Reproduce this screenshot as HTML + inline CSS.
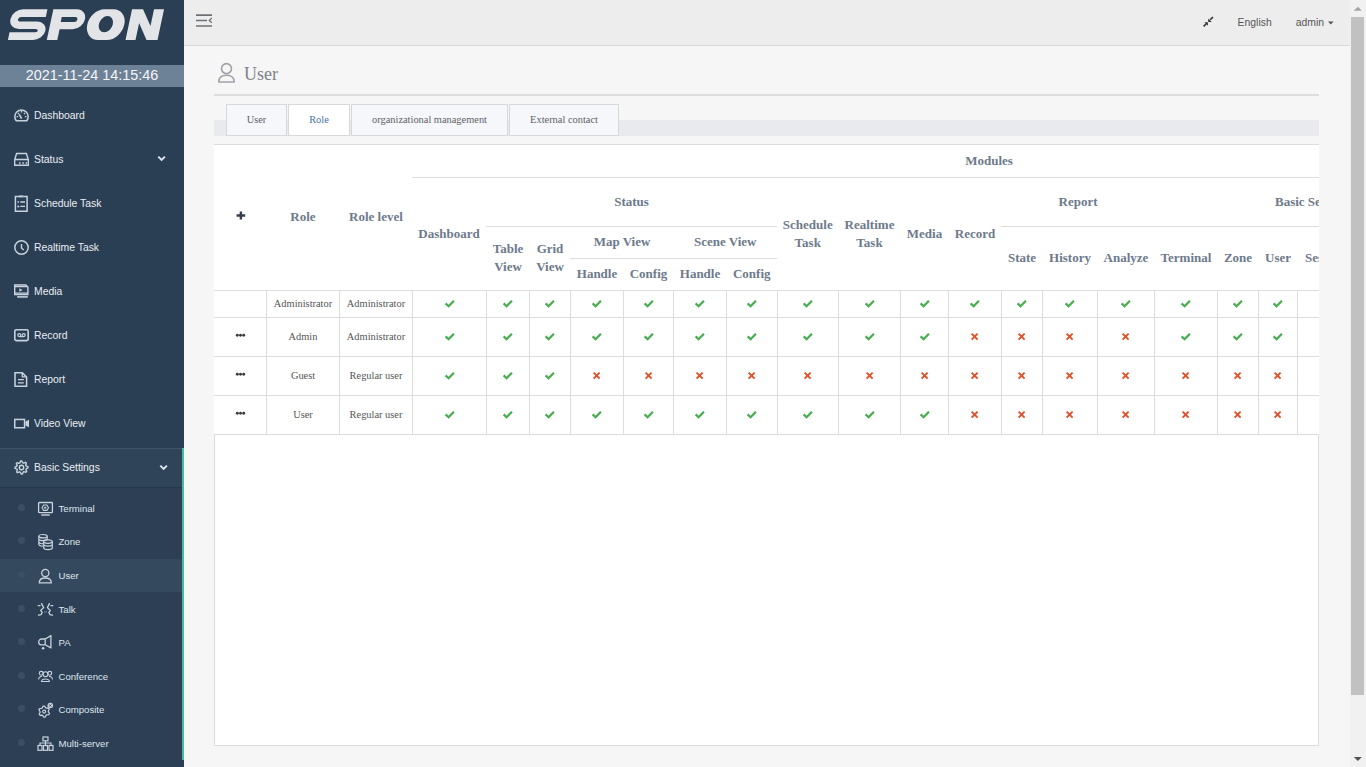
<!DOCTYPE html>
<html><head><meta charset="utf-8"><title>User</title>
<style>
html,body{margin:0;padding:0;width:1366px;height:767px;overflow:hidden;background:#f6f6f6;}
*{box-sizing:border-box;}
.abs{position:absolute;}
</style></head><body>
<div class="abs" style="left:0;top:0;width:184px;height:767px;background:#2b3f54;"></div>
<div class="abs" style="left:0;top:448px;width:182px;height:312px;background:#2c3f54;"></div>
<div class="abs" style="left:0;top:448px;width:182px;height:40px;background:#2f4459;border-top:1px solid #3f536a;border-bottom:1px solid #26384b;"></div>
<div class="abs" style="left:0;top:559px;width:182px;height:33px;background:#35495e;"></div>
<div class="abs" style="left:182px;top:448px;width:2.3px;height:312px;background:#48bca2;"></div>
<svg class="abs" style="left:0;top:0" width="184" height="60" viewBox="0 0 184 60">
<g transform="matrix(1 0 -0.2126 1 8.504 0)" fill="#e2e4e7">
<path d="M40.9 13.1 H16.6 A6.8 6.1 0 0 0 16.6 25.3 H33 A6.6 5.4 0 0 1 33 36.1 H7.9" fill="none" stroke="#e2e4e7" stroke-width="7.6"/>
<path fill-rule="evenodd" d="M46.8 9.2 H70.5 A10.05 10.05 0 0 1 70.5 29.3 H57.3 V40 H46.8 Z M56.9 17.1 H70.5 A2.5 2.5 0 0 1 70.5 22.1 H56.9 Z"/>
<path fill-rule="evenodd" d="M98 9.2 H107 A14 15.4 0 0 1 121 24.6 A14 15.4 0 0 1 107 40 H98 A14 15.4 0 0 1 84 24.6 A14 15.4 0 0 1 98 9.2 Z M102.5 16.1 A7 8.1 0 1 0 102.5 32.3 A7 8.1 0 1 0 102.5 16.1 Z"/>
<path d="M125.5 40 V9.2 H136.5 L147.5 26 V9.2 H157.5 V40 H146.5 L135.5 23 V40 Z"/>
</g></svg>
<div class="abs" style="left:0;top:65px;width:184px;height:22px;background:#6d8197;"></div>
<div style="position:absolute;left:0.00px;top:68px;width:184px;text-align:center;font:normal 14.4px/14.4px 'Liberation Sans', sans-serif;color:#f4f6f8;white-space:nowrap;">2021-11-24 14:15:46</div>
<div style="position:absolute;left:34.00px;top:111px;font:normal 10.4px/10.4px 'Liberation Sans', sans-serif;color:#e9eef3;white-space:nowrap;">Dashboard</div>
<div style="position:absolute;left:34.00px;top:155px;font:normal 10.4px/10.4px 'Liberation Sans', sans-serif;color:#e9eef3;white-space:nowrap;">Status</div>
<div style="position:absolute;left:34.00px;top:199px;font:normal 10.4px/10.4px 'Liberation Sans', sans-serif;color:#e9eef3;white-space:nowrap;">Schedule Task</div>
<div style="position:absolute;left:34.00px;top:243px;font:normal 10.4px/10.4px 'Liberation Sans', sans-serif;color:#e9eef3;white-space:nowrap;">Realtime Task</div>
<div style="position:absolute;left:34.00px;top:287px;font:normal 10.4px/10.4px 'Liberation Sans', sans-serif;color:#e9eef3;white-space:nowrap;">Media</div>
<div style="position:absolute;left:34.00px;top:331px;font:normal 10.4px/10.4px 'Liberation Sans', sans-serif;color:#e9eef3;white-space:nowrap;">Record</div>
<div style="position:absolute;left:34.00px;top:375px;font:normal 10.4px/10.4px 'Liberation Sans', sans-serif;color:#e9eef3;white-space:nowrap;">Report</div>
<div style="position:absolute;left:34.00px;top:419px;font:normal 10.4px/10.4px 'Liberation Sans', sans-serif;color:#e9eef3;white-space:nowrap;">Video View</div>
<div style="position:absolute;left:34.00px;top:463px;font:normal 10.4px/10.4px 'Liberation Sans', sans-serif;color:#e9eef3;white-space:nowrap;">Basic Settings</div>
<svg class="abs" style="left:13px;top:108px" width="18" height="16" viewBox="0 0 18 16" fill="none" stroke="#c9d3de" stroke-width="1.4"><path d="M3.2 12.8 A6.7 6.7 0 1 1 13.8 12.8 Z" stroke-width="1.5"/><path d="M8.5 3 V4.6 M3.6 8.6 H5.1 M11.9 8.6 H13.4 M5 5 L6 6 M12 5 L11 6"/><path d="M8.6 10.6 L6.2 6.3" stroke-width="1.7"/></svg>
<svg class="abs" style="left:14px;top:152px" width="16" height="15" viewBox="0 0 16 15" fill="none" stroke="#c9d3de" stroke-width="1.4"><path d="M2.6 1.5 H12.4 L14.3 7.5 V13.3 H0.7 V7.5 Z M0.7 7.5 H14.3" stroke-width="1.4"/><path d="M5 11 H6.6 M8.3 11 H9.9 M11.5 11 H13" stroke-width="1.5"/></svg>
<svg class="abs" style="left:14px;top:195px" width="15" height="18" viewBox="0 0 15 18" fill="none" stroke="#c9d3de" stroke-width="1.4"><path d="M5 1.6 H1.4 V16.2 H13.1 V1.6 H9.6" stroke-width="1.5"/><path d="M5 1.4 H9.6" stroke-width="2"/><path d="M3.5 7 H5 M6.3 7 H11 M6.3 11.3 H11" stroke-width="1.3"/><circle cx="4.3" cy="11.5" r="1" fill="#c9d3de" stroke="none"/></svg>
<svg class="abs" style="left:13px;top:239px" width="17" height="17" viewBox="0 0 17 17" fill="none" stroke="#c9d3de" stroke-width="1.4"><circle cx="8.5" cy="8.5" r="6.7" stroke-width="1.5"/><path d="M8.5 5 V9 L10.7 11"/></svg>
<svg class="abs" style="left:13px;top:283px" width="18" height="17" viewBox="0 0 18 17" fill="none" stroke="#c9d3de" stroke-width="1.4"><path d="M1.7 2 H12.8 L14.9 4 V11.6 H1.7 Z" stroke-width="1.4"/><path d="M1.7 3.6 H14.9 M1.7 10.1 H14.9" stroke-width="1.1"/><path d="M4.2 13.9 H14.8" stroke-width="1.6"/><path d="M6.4 5.2 L6.4 8.8 L9.6 7 Z" fill="#c9d3de" stroke="none"/></svg>
<svg class="abs" style="left:13px;top:328px" width="17" height="15" viewBox="0 0 17 15" fill="none" stroke="#c9d3de" stroke-width="1.4"><rect x="1.8" y="1.8" width="13.4" height="10.8" rx="1.5" stroke-width="1.6"/><circle cx="6.3" cy="7.1" r="1.5" stroke-width="1.2"/><circle cx="10.7" cy="7.1" r="1.5" stroke-width="1.2"/><path d="M6.3 8.6 H10.7" stroke-width="1.2"/></svg>
<svg class="abs" style="left:13px;top:371px" width="16" height="17" viewBox="0 0 16 17" fill="none" stroke="#c9d3de" stroke-width="1.4"><path d="M2 1.7 H9.3 L13.6 6 V15.2 H2 Z" stroke-width="1.5"/><path d="M9.3 1.7 V5.8 H13.6" stroke-width="1.3"/><path d="M5 8.7 H10.8 M5 11.8 H10.8" stroke-width="1.3"/></svg>
<svg class="abs" style="left:13px;top:417px" width="17" height="13" viewBox="0 0 17 13" fill="none" stroke="#c9d3de" stroke-width="1.4"><rect x="1.75" y="2.45" width="9.8" height="8.3" stroke-width="1.5"/><path d="M12.5 4.6 L16 2.8 V10.2 L12.5 8.5 Z" fill="#c9d3de" stroke="none"/></svg>
<svg class="abs" style="left:13px;top:459px" width="17" height="17" viewBox="0 0 17 17" fill="none" stroke="#c9d3de" stroke-width="1.4"><path d="M7.55 2.07 L8.82 2.01 L9.69 3.75 L10.60 4.07 L12.37 3.28 L13.32 4.13 L12.70 5.98 L13.11 6.85 L14.93 7.55 L14.99 8.82 L13.25 9.69 L12.93 10.60 L13.72 12.37 L12.87 13.32 L11.02 12.70 L10.15 13.11 L9.45 14.93 L8.18 14.99 L7.31 13.25 L6.40 12.93 L4.63 13.72 L3.68 12.87 L4.30 11.02 L3.89 10.15 L2.07 9.45 L2.01 8.18 L3.75 7.31 L4.07 6.40 L3.28 4.63 L4.13 3.68 L5.98 4.30 L6.85 3.89 Z" stroke-width="1.4" stroke-linejoin="round"/><circle cx="8.5" cy="8.5" r="2.2" stroke-width="1.4"/></svg>
<svg class="abs" style="left:157px;top:155px" width="10" height="8" viewBox="0 0 10 8"><path d="M1.3 1.6 L4.6 4.9 L7.9 1.6" fill="none" stroke="#dbe4ee" stroke-width="2"/></svg>
<svg class="abs" style="left:158.5px;top:463.5px" width="10" height="8" viewBox="0 0 10 8"><path d="M1.3 1.6 L4.6 4.9 L7.9 1.6" fill="none" stroke="#dbe4ee" stroke-width="2"/></svg>
<div style="position:absolute;left:58.50px;top:504px;font:normal 9.6px/9.6px 'Liberation Sans', sans-serif;color:#dfe6ed;white-space:nowrap;">Terminal</div>
<div class="abs" style="left:18px;top:503.7px;width:7px;height:7px;border-radius:50%;background:#3b4e65;"></div>
<div style="position:absolute;left:58.50px;top:537px;font:normal 9.6px/9.6px 'Liberation Sans', sans-serif;color:#dfe6ed;white-space:nowrap;">Zone</div>
<div class="abs" style="left:18px;top:536.7px;width:7px;height:7px;border-radius:50%;background:#3b4e65;"></div>
<div style="position:absolute;left:58.50px;top:571px;font:normal 9.6px/9.6px 'Liberation Sans', sans-serif;color:#dfe6ed;white-space:nowrap;">User</div>
<div class="abs" style="left:18px;top:570.7px;width:7px;height:7px;border-radius:50%;background:#3b4e65;"></div>
<div style="position:absolute;left:58.50px;top:605px;font:normal 9.6px/9.6px 'Liberation Sans', sans-serif;color:#dfe6ed;white-space:nowrap;">Talk</div>
<div class="abs" style="left:18px;top:604.7px;width:7px;height:7px;border-radius:50%;background:#3b4e65;"></div>
<div style="position:absolute;left:58.50px;top:638px;font:normal 9.6px/9.6px 'Liberation Sans', sans-serif;color:#dfe6ed;white-space:nowrap;">PA</div>
<div class="abs" style="left:18px;top:637.7px;width:7px;height:7px;border-radius:50%;background:#3b4e65;"></div>
<div style="position:absolute;left:58.50px;top:672px;font:normal 9.6px/9.6px 'Liberation Sans', sans-serif;color:#dfe6ed;white-space:nowrap;">Conference</div>
<div class="abs" style="left:18px;top:671.7px;width:7px;height:7px;border-radius:50%;background:#3b4e65;"></div>
<div style="position:absolute;left:58.50px;top:705px;font:normal 9.6px/9.6px 'Liberation Sans', sans-serif;color:#dfe6ed;white-space:nowrap;">Composite</div>
<div class="abs" style="left:18px;top:704.7px;width:7px;height:7px;border-radius:50%;background:#3b4e65;"></div>
<div style="position:absolute;left:58.50px;top:739px;font:normal 9.6px/9.6px 'Liberation Sans', sans-serif;color:#dfe6ed;white-space:nowrap;">Multi-server</div>
<div class="abs" style="left:18px;top:738.7px;width:7px;height:7px;border-radius:50%;background:#3b4e65;"></div>
<svg class="abs" style="left:37px;top:500px" width="17" height="17" viewBox="0 0 17 17" fill="none" stroke="#c9d3de" stroke-width="1.2"><rect x="1.6" y="2.5" width="13.8" height="10.2" rx="0.8" stroke-width="1.3"/><path d="M4.3 15 H12.7" stroke-width="1.4"/><path d="M5 7.7 L6.6 5 H9.9 L11.5 7.7 L9.9 10.4 H6.6 Z" stroke-width="1.1"/><rect x="7.2" y="6.8" width="2.1" height="1.8" fill="#c9d3de" stroke="none"/></svg>
<svg class="abs" style="left:37px;top:533px" width="17" height="18" viewBox="0 0 17 18" fill="none" stroke="#c9d3de" stroke-width="1.2"><ellipse cx="6" cy="3.2" rx="4.2" ry="1.7"/><path d="M1.8 3.2 V11.5 M10.2 3.2 V6 M1.8 6.2 C2.5 8 9 8 10.2 6.2 M1.8 9 C2.5 10.7 5 10.8 6 10.6 M1.8 11.5 C2.5 13 5 13.2 6 13"/><ellipse cx="11" cy="8.6" rx="4.3" ry="1.7"/><path d="M6.7 8.6 V15.2 M15.3 8.6 V15.2 M6.7 11.8 C7.5 13.5 14.5 13.5 15.3 11.8 M6.7 15.2 C7.5 17 14.5 17 15.3 15.2"/></svg>
<svg class="abs" style="left:37px;top:567px" width="17" height="18" viewBox="0 0 17 18" fill="none" stroke="#c9d3de" stroke-width="1.2"><circle cx="8.3" cy="6" r="3.6" stroke-width="1.3"/><path d="M2.3 15.8 C2.3 12.3 4.8 11 8.3 11 C11.8 11 14.3 12.3 14.3 15.8 Z" stroke-width="1.3"/></svg>
<svg class="abs" style="left:37px;top:602px" width="17" height="16" viewBox="0 0 17 16" fill="none" stroke="#c9d3de" stroke-width="1.2"><path d="M4.6 1.6 L6.6 5.6 L3.7 8.5 L5.2 10.3 L4.2 12.6 L1.5 13.1 M1.2 3.6 H3.1 M12.4 1.6 L10.4 5.6 L13.3 8.5 L11.8 10.3 L12.8 12.6 L15.5 13.1 M13.9 3.6 H15.8" stroke-width="1.3" stroke-linejoin="round" stroke-linecap="round"/><path d="M7.3 9.6 L8.2 10.4 M9.7 9.6 L8.8 10.4" stroke-width="0.8"/></svg>
<svg class="abs" style="left:37px;top:634px" width="17" height="17" viewBox="0 0 17 17" fill="none" stroke="#c9d3de" stroke-width="1.2"><path d="M8.2 5 H4.6 A2.9 2.9 0 0 0 4.6 10.8 H8.2 Z M8.2 5 L13.9 1.6 V13.9 L8.2 10.8" stroke-width="1.3" stroke-linejoin="round"/><circle cx="6.1" cy="14.2" r="1.3" fill="#c9d3de" stroke="none"/></svg>
<svg class="abs" style="left:37px;top:668px" width="17" height="16" viewBox="0 0 17 16" fill="none" stroke="#c9d3de" stroke-width="1.2"><circle cx="8.5" cy="6.2" r="2.4" stroke-width="1.1"/><path d="M4.6 13.5 C4.6 10.2 12.4 10.2 12.4 13.5 Z" stroke-width="1.1"/><circle cx="4.2" cy="5.3" r="1.9" stroke-width="1.1"/><circle cx="12.8" cy="5.3" r="1.9" stroke-width="1.1"/><path d="M1.6 11.6 C1.6 9.2 3 8.4 5 8.6 M15.4 11.6 C15.4 9.2 14 8.4 12 8.6" stroke-width="1.1"/></svg>
<svg class="abs" style="left:37px;top:701px" width="17" height="17" viewBox="0 0 17 17" fill="none" stroke="#c9d3de" stroke-width="1.2"><path d="M6.11 5.11 L7.57 5.01 L8.55 6.62 L9.53 7.11 L11.41 6.91 L12.22 8.12 L11.32 9.78 L11.39 10.87 L12.50 12.40 L11.86 13.71 L9.97 13.76 L9.06 14.37 L8.29 16.09 L6.83 16.19 L5.85 14.58 L4.87 14.09 L2.99 14.29 L2.18 13.08 L3.08 11.42 L3.01 10.33 L1.90 8.80 L2.54 7.49 L4.43 7.44 L5.34 6.83 Z" stroke-width="1.2" stroke-linejoin="round"/><circle cx="7.2" cy="10.6" r="1.5" stroke-width="1.1"/><circle cx="13.3" cy="4.5" r="2.8" fill="#c9d3de" stroke="none"/><path d="M12.2 3.4 L14.4 5.6 M14.4 3.4 L12.2 5.6" stroke="#2c3f54" stroke-width="0.9"/></svg>
<svg class="abs" style="left:37px;top:736px" width="17" height="16" viewBox="0 0 17 16" fill="none" stroke="#c9d3de" stroke-width="1.2"><rect x="6" y="1" width="5" height="3.8"/><path d="M8.5 4.8 V7 M3 9 V7 H14 V9 M8.5 7 V9"/><rect x="1" y="9.5" width="4" height="4.8"/><rect x="6.5" y="9.5" width="4" height="4.8"/><rect x="12" y="9.5" width="4" height="4.8"/></svg>
<div class="abs" style="left:184px;top:0;width:1166px;height:46px;background:#ededed;border-bottom:1px solid #d9d9d9;"></div>
<svg class="abs" style="left:195px;top:12px" width="20" height="17" viewBox="0 0 20 17"><path d="M1 3.2 H17 M1 8.5 H12 M1 14 H17" stroke="#6d7075" stroke-width="1.7" fill="none"/><path d="M16.8 6 L14.3 8.4 L16.8 10.8" stroke="#6d7075" stroke-width="1.3" fill="none"/></svg>
<svg class="abs" style="left:1202px;top:16px" width="12" height="12" viewBox="0 0 12 12"><path d="M1.6 10.4 L4.3 7.7 M8.2 3.8 L10.9 1.1" stroke="#333" stroke-width="1.6" fill="none"/><path d="M2.4 6.2 H5.9 V9.7 Z M6.2 2.4 V5.9 H9.7 Z" fill="#333"/></svg>
<div style="position:absolute;left:1237.60px;top:18px;font:normal 10.4px/10.4px 'Liberation Sans', sans-serif;color:#555555;white-space:nowrap;">English</div>
<div style="position:absolute;left:1295.80px;top:18px;font:normal 10.4px/10.4px 'Liberation Sans', sans-serif;color:#555555;white-space:nowrap;">admin</div>
<svg class="abs" style="left:1327px;top:20px" width="8" height="6" viewBox="0 0 8 6"><path d="M1 1.4 H6.6 L3.8 4.5 Z" fill="#555"/></svg>
<svg class="abs" style="left:216px;top:62px" width="21" height="22" viewBox="0 0 21 22"><circle cx="10.5" cy="6.6" r="5" fill="none" stroke="#9ea2a8" stroke-width="1.6"/><path d="M2.8 20 C2.8 15 6 13.3 10.5 13.3 C15 13.3 18.2 15 18.2 20 Z" fill="none" stroke="#9ea2a8" stroke-width="1.6" stroke-linejoin="round"/></svg>
<div style="position:absolute;left:244.00px;top:65px;font:normal 18px/18px 'Liberation Serif', serif;color:#7d828a;white-space:nowrap;">User</div>
<div class="abs" style="left:214px;top:94px;width:1105px;height:2px;background:#dcdddf;"></div>
<div class="abs" style="left:214px;top:120px;width:1105px;height:16px;background:#e8eaed;"></div>
<div class="abs" style="left:226px;top:104px;width:61px;height:32px;background:#f5f7fa;border:1px solid #d6d8db;"></div>
<div style="position:absolute;left:226.00px;top:115px;width:61px;text-align:center;font:normal 10.4px/10.4px 'Liberation Serif', serif;color:#5d6167;white-space:nowrap;">User</div>
<div class="abs" style="left:288px;top:104px;width:62px;height:32px;background:#ffffff;border:1px solid #d6d8db;"></div>
<div style="position:absolute;left:288.00px;top:115px;width:62px;text-align:center;font:normal 10.4px/10.4px 'Liberation Serif', serif;color:#4673a6;white-space:nowrap;">Role</div>
<div class="abs" style="left:351px;top:104px;width:157px;height:32px;background:#f5f7fa;border:1px solid #d6d8db;"></div>
<div style="position:absolute;left:351.00px;top:115px;width:157px;text-align:center;font:normal 10.4px/10.4px 'Liberation Serif', serif;color:#5d6167;white-space:nowrap;">organizational management</div>
<div class="abs" style="left:509px;top:104px;width:110px;height:32px;background:#f5f7fa;border:1px solid #d6d8db;"></div>
<div style="position:absolute;left:509.00px;top:115px;width:110px;text-align:center;font:normal 10.4px/10.4px 'Liberation Serif', serif;color:#5d6167;white-space:nowrap;">External contact</div>
<div class="abs" style="left:214px;top:144px;width:1105px;height:290px;background:#ffffff;"></div>
<div class="abs" style="left:214px;top:434px;width:1105px;height:312px;background:#ffffff;border:1px solid #dcdcdc;"></div>
<div class="abs" style="left:214px;top:144px;width:1105px;height:1px;background:#dddddd;"></div>
<div class="abs" style="left:412px;top:177px;width:907px;height:1px;background:#dddddd;"></div>
<div class="abs" style="left:486px;top:226px;width:291px;height:1px;background:#dddddd;"></div>
<div class="abs" style="left:1001px;top:226px;width:318px;height:1px;background:#dddddd;"></div>
<div class="abs" style="left:570px;top:258px;width:207px;height:1px;background:#dddddd;"></div>
<div class="abs" style="left:214px;top:290px;width:1105px;height:1px;background:#dddddd;"></div>
<div class="abs" style="left:214px;top:317px;width:1105px;height:1px;background:#dddddd;"></div>
<div class="abs" style="left:214px;top:356px;width:1105px;height:1px;background:#dddddd;"></div>
<div class="abs" style="left:214px;top:395px;width:1105px;height:1px;background:#dddddd;"></div>
<div class="abs" style="left:266px;top:290px;width:1px;height:144px;background:#dddddd;"></div>
<div class="abs" style="left:339px;top:290px;width:1px;height:144px;background:#dddddd;"></div>
<div class="abs" style="left:412px;top:290px;width:1px;height:144px;background:#dddddd;"></div>
<div class="abs" style="left:486px;top:290px;width:1px;height:144px;background:#dddddd;"></div>
<div class="abs" style="left:529px;top:290px;width:1px;height:144px;background:#dddddd;"></div>
<div class="abs" style="left:570px;top:290px;width:1px;height:144px;background:#dddddd;"></div>
<div class="abs" style="left:623px;top:290px;width:1px;height:144px;background:#dddddd;"></div>
<div class="abs" style="left:673px;top:290px;width:1px;height:144px;background:#dddddd;"></div>
<div class="abs" style="left:726px;top:290px;width:1px;height:144px;background:#dddddd;"></div>
<div class="abs" style="left:777px;top:290px;width:1px;height:144px;background:#dddddd;"></div>
<div class="abs" style="left:838px;top:290px;width:1px;height:144px;background:#dddddd;"></div>
<div class="abs" style="left:900px;top:290px;width:1px;height:144px;background:#dddddd;"></div>
<div class="abs" style="left:948px;top:290px;width:1px;height:144px;background:#dddddd;"></div>
<div class="abs" style="left:1001px;top:290px;width:1px;height:144px;background:#dddddd;"></div>
<div class="abs" style="left:1042px;top:290px;width:1px;height:144px;background:#dddddd;"></div>
<div class="abs" style="left:1097px;top:290px;width:1px;height:144px;background:#dddddd;"></div>
<div class="abs" style="left:1154px;top:290px;width:1px;height:144px;background:#dddddd;"></div>
<div class="abs" style="left:1217px;top:290px;width:1px;height:144px;background:#dddddd;"></div>
<div class="abs" style="left:1258px;top:290px;width:1px;height:144px;background:#dddddd;"></div>
<div class="abs" style="left:1297px;top:290px;width:1px;height:144px;background:#dddddd;"></div>
<div style="position:absolute;left:889.00px;top:154px;width:200px;text-align:center;font:bold 13px/13px 'Liberation Serif', serif;color:#6d7a8c;white-space:nowrap;">Modules</div>
<div style="position:absolute;left:531.50px;top:195px;width:200px;text-align:center;font:bold 13px/13px 'Liberation Serif', serif;color:#6d7a8c;white-space:nowrap;">Status</div>
<div style="position:absolute;left:978.00px;top:195px;width:200px;text-align:center;font:bold 13px/13px 'Liberation Serif', serif;color:#6d7a8c;white-space:nowrap;">Report</div>
<div style="position:absolute;left:1275.00px;top:195px;font:bold 13px/13px 'Liberation Serif', serif;color:#6d7a8c;white-space:nowrap;">Basic Settings</div>
<div style="position:absolute;left:203.00px;top:210px;width:200px;text-align:center;font:bold 13px/13px 'Liberation Serif', serif;color:#6d7a8c;white-space:nowrap;">Role</div>
<div style="position:absolute;left:276.00px;top:210px;width:200px;text-align:center;font:bold 13px/13px 'Liberation Serif', serif;color:#6d7a8c;white-space:nowrap;">Role level</div>
<div style="position:absolute;left:349.00px;top:227px;width:200px;text-align:center;font:bold 13px/13px 'Liberation Serif', serif;color:#6d7a8c;white-space:nowrap;">Dashboard</div>
<div style="position:absolute;left:408.00px;top:242px;width:200px;text-align:center;font:bold 13px/13px 'Liberation Serif', serif;color:#6d7a8c;white-space:nowrap;">Table</div>
<div style="position:absolute;left:408.00px;top:260px;width:200px;text-align:center;font:bold 13px/13px 'Liberation Serif', serif;color:#6d7a8c;white-space:nowrap;">View</div>
<div style="position:absolute;left:450.00px;top:242px;width:200px;text-align:center;font:bold 13px/13px 'Liberation Serif', serif;color:#6d7a8c;white-space:nowrap;">Grid</div>
<div style="position:absolute;left:450.00px;top:260px;width:200px;text-align:center;font:bold 13px/13px 'Liberation Serif', serif;color:#6d7a8c;white-space:nowrap;">View</div>
<div style="position:absolute;left:522.00px;top:235px;width:200px;text-align:center;font:bold 13px/13px 'Liberation Serif', serif;color:#6d7a8c;white-space:nowrap;">Map View</div>
<div style="position:absolute;left:625.25px;top:235px;width:200px;text-align:center;font:bold 13px/13px 'Liberation Serif', serif;color:#6d7a8c;white-space:nowrap;">Scene View</div>
<div style="position:absolute;left:497.00px;top:267px;width:200px;text-align:center;font:bold 13px/13px 'Liberation Serif', serif;color:#6d7a8c;white-space:nowrap;">Handle</div>
<div style="position:absolute;left:548.50px;top:267px;width:200px;text-align:center;font:bold 13px/13px 'Liberation Serif', serif;color:#6d7a8c;white-space:nowrap;">Config</div>
<div style="position:absolute;left:600.00px;top:267px;width:200px;text-align:center;font:bold 13px/13px 'Liberation Serif', serif;color:#6d7a8c;white-space:nowrap;">Handle</div>
<div style="position:absolute;left:651.75px;top:267px;width:200px;text-align:center;font:bold 13px/13px 'Liberation Serif', serif;color:#6d7a8c;white-space:nowrap;">Config</div>
<div style="position:absolute;left:707.75px;top:218px;width:200px;text-align:center;font:bold 13px/13px 'Liberation Serif', serif;color:#6d7a8c;white-space:nowrap;">Schedule</div>
<div style="position:absolute;left:707.75px;top:236px;width:200px;text-align:center;font:bold 13px/13px 'Liberation Serif', serif;color:#6d7a8c;white-space:nowrap;">Task</div>
<div style="position:absolute;left:769.50px;top:218px;width:200px;text-align:center;font:bold 13px/13px 'Liberation Serif', serif;color:#6d7a8c;white-space:nowrap;">Realtime</div>
<div style="position:absolute;left:769.50px;top:236px;width:200px;text-align:center;font:bold 13px/13px 'Liberation Serif', serif;color:#6d7a8c;white-space:nowrap;">Task</div>
<div style="position:absolute;left:824.50px;top:227px;width:200px;text-align:center;font:bold 13px/13px 'Liberation Serif', serif;color:#6d7a8c;white-space:nowrap;">Media</div>
<div style="position:absolute;left:875.00px;top:227px;width:200px;text-align:center;font:bold 13px/13px 'Liberation Serif', serif;color:#6d7a8c;white-space:nowrap;">Record</div>
<div style="position:absolute;left:922.00px;top:251px;width:200px;text-align:center;font:bold 13px/13px 'Liberation Serif', serif;color:#6d7a8c;white-space:nowrap;">State</div>
<div style="position:absolute;left:970.00px;top:251px;width:200px;text-align:center;font:bold 13px/13px 'Liberation Serif', serif;color:#6d7a8c;white-space:nowrap;">History</div>
<div style="position:absolute;left:1026.00px;top:251px;width:200px;text-align:center;font:bold 13px/13px 'Liberation Serif', serif;color:#6d7a8c;white-space:nowrap;">Analyze</div>
<div style="position:absolute;left:1086.00px;top:251px;width:200px;text-align:center;font:bold 13px/13px 'Liberation Serif', serif;color:#6d7a8c;white-space:nowrap;">Terminal</div>
<div style="position:absolute;left:1138.00px;top:251px;width:200px;text-align:center;font:bold 13px/13px 'Liberation Serif', serif;color:#6d7a8c;white-space:nowrap;">Zone</div>
<div style="position:absolute;left:1178.00px;top:251px;width:200px;text-align:center;font:bold 13px/13px 'Liberation Serif', serif;color:#6d7a8c;white-space:nowrap;">User</div>
<div style="position:absolute;left:1305.00px;top:251px;font:bold 13px/13px 'Liberation Serif', serif;color:#6d7a8c;white-space:nowrap;">Session</div>
<svg class="abs" style="left:236px;top:210.5px" width="10" height="9" viewBox="0 0 10 9"><path d="M4.9 0.5 V8.5 M0.6 4.5 H9.2" stroke="#353e4b" stroke-width="2.4" fill="none"/></svg>
<div style="position:absolute;left:266.50px;top:299px;width:73px;text-align:center;font:normal 10.4px/10.4px 'Liberation Serif', serif;color:#555555;white-space:nowrap;">Administrator</div>
<div style="position:absolute;left:339.50px;top:299px;width:73px;text-align:center;font:normal 10.4px/10.4px 'Liberation Serif', serif;color:#555555;white-space:nowrap;">Administrator</div>
<svg class="abs" style="left:443.5px;top:299.0px" width="11" height="9" viewBox="0 0 11 9"><path d="M1.6 4.4 L4.6 7.2 L9.9 1.7" stroke="#45ad4e" stroke-width="2.2" fill="none"/></svg>
<svg class="abs" style="left:502.0px;top:299.0px" width="11" height="9" viewBox="0 0 11 9"><path d="M1.6 4.4 L4.6 7.2 L9.9 1.7" stroke="#45ad4e" stroke-width="2.2" fill="none"/></svg>
<svg class="abs" style="left:544.0px;top:299.0px" width="11" height="9" viewBox="0 0 11 9"><path d="M1.6 4.4 L4.6 7.2 L9.9 1.7" stroke="#45ad4e" stroke-width="2.2" fill="none"/></svg>
<svg class="abs" style="left:591.0px;top:299.0px" width="11" height="9" viewBox="0 0 11 9"><path d="M1.6 4.4 L4.6 7.2 L9.9 1.7" stroke="#45ad4e" stroke-width="2.2" fill="none"/></svg>
<svg class="abs" style="left:642.5px;top:299.0px" width="11" height="9" viewBox="0 0 11 9"><path d="M1.6 4.4 L4.6 7.2 L9.9 1.7" stroke="#45ad4e" stroke-width="2.2" fill="none"/></svg>
<svg class="abs" style="left:694.0px;top:299.0px" width="11" height="9" viewBox="0 0 11 9"><path d="M1.6 4.4 L4.6 7.2 L9.9 1.7" stroke="#45ad4e" stroke-width="2.2" fill="none"/></svg>
<svg class="abs" style="left:746.0px;top:299.0px" width="11" height="9" viewBox="0 0 11 9"><path d="M1.6 4.4 L4.6 7.2 L9.9 1.7" stroke="#45ad4e" stroke-width="2.2" fill="none"/></svg>
<svg class="abs" style="left:802.0px;top:299.0px" width="11" height="9" viewBox="0 0 11 9"><path d="M1.6 4.4 L4.6 7.2 L9.9 1.7" stroke="#45ad4e" stroke-width="2.2" fill="none"/></svg>
<svg class="abs" style="left:863.5px;top:299.0px" width="11" height="9" viewBox="0 0 11 9"><path d="M1.6 4.4 L4.6 7.2 L9.9 1.7" stroke="#45ad4e" stroke-width="2.2" fill="none"/></svg>
<svg class="abs" style="left:918.5px;top:299.0px" width="11" height="9" viewBox="0 0 11 9"><path d="M1.6 4.4 L4.6 7.2 L9.9 1.7" stroke="#45ad4e" stroke-width="2.2" fill="none"/></svg>
<svg class="abs" style="left:969.0px;top:299.0px" width="11" height="9" viewBox="0 0 11 9"><path d="M1.6 4.4 L4.6 7.2 L9.9 1.7" stroke="#45ad4e" stroke-width="2.2" fill="none"/></svg>
<svg class="abs" style="left:1016.0px;top:299.0px" width="11" height="9" viewBox="0 0 11 9"><path d="M1.6 4.4 L4.6 7.2 L9.9 1.7" stroke="#45ad4e" stroke-width="2.2" fill="none"/></svg>
<svg class="abs" style="left:1064.0px;top:299.0px" width="11" height="9" viewBox="0 0 11 9"><path d="M1.6 4.4 L4.6 7.2 L9.9 1.7" stroke="#45ad4e" stroke-width="2.2" fill="none"/></svg>
<svg class="abs" style="left:1120.0px;top:299.0px" width="11" height="9" viewBox="0 0 11 9"><path d="M1.6 4.4 L4.6 7.2 L9.9 1.7" stroke="#45ad4e" stroke-width="2.2" fill="none"/></svg>
<svg class="abs" style="left:1180.0px;top:299.0px" width="11" height="9" viewBox="0 0 11 9"><path d="M1.6 4.4 L4.6 7.2 L9.9 1.7" stroke="#45ad4e" stroke-width="2.2" fill="none"/></svg>
<svg class="abs" style="left:1232.0px;top:299.0px" width="11" height="9" viewBox="0 0 11 9"><path d="M1.6 4.4 L4.6 7.2 L9.9 1.7" stroke="#45ad4e" stroke-width="2.2" fill="none"/></svg>
<svg class="abs" style="left:1272.0px;top:299.0px" width="11" height="9" viewBox="0 0 11 9"><path d="M1.6 4.4 L4.6 7.2 L9.9 1.7" stroke="#45ad4e" stroke-width="2.2" fill="none"/></svg>
<div style="position:absolute;left:266.50px;top:332px;width:73px;text-align:center;font:normal 10.4px/10.4px 'Liberation Serif', serif;color:#555555;white-space:nowrap;">Admin</div>
<div style="position:absolute;left:339.50px;top:332px;width:73px;text-align:center;font:normal 10.4px/10.4px 'Liberation Serif', serif;color:#555555;white-space:nowrap;">Administrator</div>
<svg class="abs" style="left:235px;top:333.3px" width="11" height="5" viewBox="0 0 11 5"><circle cx="2.3" cy="2.2" r="1.45" fill="#3a3a3a"/><circle cx="5.5" cy="2.2" r="1.45" fill="#3a3a3a"/><circle cx="8.7" cy="2.2" r="1.45" fill="#3a3a3a"/></svg>
<svg class="abs" style="left:443.5px;top:332.0px" width="11" height="9" viewBox="0 0 11 9"><path d="M1.6 4.4 L4.6 7.2 L9.9 1.7" stroke="#45ad4e" stroke-width="2.2" fill="none"/></svg>
<svg class="abs" style="left:502.0px;top:332.0px" width="11" height="9" viewBox="0 0 11 9"><path d="M1.6 4.4 L4.6 7.2 L9.9 1.7" stroke="#45ad4e" stroke-width="2.2" fill="none"/></svg>
<svg class="abs" style="left:544.0px;top:332.0px" width="11" height="9" viewBox="0 0 11 9"><path d="M1.6 4.4 L4.6 7.2 L9.9 1.7" stroke="#45ad4e" stroke-width="2.2" fill="none"/></svg>
<svg class="abs" style="left:591.0px;top:332.0px" width="11" height="9" viewBox="0 0 11 9"><path d="M1.6 4.4 L4.6 7.2 L9.9 1.7" stroke="#45ad4e" stroke-width="2.2" fill="none"/></svg>
<svg class="abs" style="left:642.5px;top:332.0px" width="11" height="9" viewBox="0 0 11 9"><path d="M1.6 4.4 L4.6 7.2 L9.9 1.7" stroke="#45ad4e" stroke-width="2.2" fill="none"/></svg>
<svg class="abs" style="left:694.0px;top:332.0px" width="11" height="9" viewBox="0 0 11 9"><path d="M1.6 4.4 L4.6 7.2 L9.9 1.7" stroke="#45ad4e" stroke-width="2.2" fill="none"/></svg>
<svg class="abs" style="left:746.0px;top:332.0px" width="11" height="9" viewBox="0 0 11 9"><path d="M1.6 4.4 L4.6 7.2 L9.9 1.7" stroke="#45ad4e" stroke-width="2.2" fill="none"/></svg>
<svg class="abs" style="left:802.0px;top:332.0px" width="11" height="9" viewBox="0 0 11 9"><path d="M1.6 4.4 L4.6 7.2 L9.9 1.7" stroke="#45ad4e" stroke-width="2.2" fill="none"/></svg>
<svg class="abs" style="left:863.5px;top:332.0px" width="11" height="9" viewBox="0 0 11 9"><path d="M1.6 4.4 L4.6 7.2 L9.9 1.7" stroke="#45ad4e" stroke-width="2.2" fill="none"/></svg>
<svg class="abs" style="left:918.5px;top:332.0px" width="11" height="9" viewBox="0 0 11 9"><path d="M1.6 4.4 L4.6 7.2 L9.9 1.7" stroke="#45ad4e" stroke-width="2.2" fill="none"/></svg>
<svg class="abs" style="left:970.0px;top:332.0px" width="9" height="9" viewBox="0 0 9 9"><path d="M1.6 1.6 L7.6 7.6 M7.6 1.6 L1.6 7.6" stroke="#e2502a" stroke-width="1.9" fill="none"/></svg>
<svg class="abs" style="left:1017.0px;top:332.0px" width="9" height="9" viewBox="0 0 9 9"><path d="M1.6 1.6 L7.6 7.6 M7.6 1.6 L1.6 7.6" stroke="#e2502a" stroke-width="1.9" fill="none"/></svg>
<svg class="abs" style="left:1065.0px;top:332.0px" width="9" height="9" viewBox="0 0 9 9"><path d="M1.6 1.6 L7.6 7.6 M7.6 1.6 L1.6 7.6" stroke="#e2502a" stroke-width="1.9" fill="none"/></svg>
<svg class="abs" style="left:1121.0px;top:332.0px" width="9" height="9" viewBox="0 0 9 9"><path d="M1.6 1.6 L7.6 7.6 M7.6 1.6 L1.6 7.6" stroke="#e2502a" stroke-width="1.9" fill="none"/></svg>
<svg class="abs" style="left:1180.0px;top:332.0px" width="11" height="9" viewBox="0 0 11 9"><path d="M1.6 4.4 L4.6 7.2 L9.9 1.7" stroke="#45ad4e" stroke-width="2.2" fill="none"/></svg>
<svg class="abs" style="left:1232.0px;top:332.0px" width="11" height="9" viewBox="0 0 11 9"><path d="M1.6 4.4 L4.6 7.2 L9.9 1.7" stroke="#45ad4e" stroke-width="2.2" fill="none"/></svg>
<svg class="abs" style="left:1272.0px;top:332.0px" width="11" height="9" viewBox="0 0 11 9"><path d="M1.6 4.4 L4.6 7.2 L9.9 1.7" stroke="#45ad4e" stroke-width="2.2" fill="none"/></svg>
<div style="position:absolute;left:266.50px;top:371px;width:73px;text-align:center;font:normal 10.4px/10.4px 'Liberation Serif', serif;color:#555555;white-space:nowrap;">Guest</div>
<div style="position:absolute;left:339.50px;top:371px;width:73px;text-align:center;font:normal 10.4px/10.4px 'Liberation Serif', serif;color:#555555;white-space:nowrap;">Regular user</div>
<svg class="abs" style="left:235px;top:372.3px" width="11" height="5" viewBox="0 0 11 5"><circle cx="2.3" cy="2.2" r="1.45" fill="#3a3a3a"/><circle cx="5.5" cy="2.2" r="1.45" fill="#3a3a3a"/><circle cx="8.7" cy="2.2" r="1.45" fill="#3a3a3a"/></svg>
<svg class="abs" style="left:443.5px;top:371.0px" width="11" height="9" viewBox="0 0 11 9"><path d="M1.6 4.4 L4.6 7.2 L9.9 1.7" stroke="#45ad4e" stroke-width="2.2" fill="none"/></svg>
<svg class="abs" style="left:502.0px;top:371.0px" width="11" height="9" viewBox="0 0 11 9"><path d="M1.6 4.4 L4.6 7.2 L9.9 1.7" stroke="#45ad4e" stroke-width="2.2" fill="none"/></svg>
<svg class="abs" style="left:544.0px;top:371.0px" width="11" height="9" viewBox="0 0 11 9"><path d="M1.6 4.4 L4.6 7.2 L9.9 1.7" stroke="#45ad4e" stroke-width="2.2" fill="none"/></svg>
<svg class="abs" style="left:592.0px;top:371.0px" width="9" height="9" viewBox="0 0 9 9"><path d="M1.6 1.6 L7.6 7.6 M7.6 1.6 L1.6 7.6" stroke="#e2502a" stroke-width="1.9" fill="none"/></svg>
<svg class="abs" style="left:643.5px;top:371.0px" width="9" height="9" viewBox="0 0 9 9"><path d="M1.6 1.6 L7.6 7.6 M7.6 1.6 L1.6 7.6" stroke="#e2502a" stroke-width="1.9" fill="none"/></svg>
<svg class="abs" style="left:695.0px;top:371.0px" width="9" height="9" viewBox="0 0 9 9"><path d="M1.6 1.6 L7.6 7.6 M7.6 1.6 L1.6 7.6" stroke="#e2502a" stroke-width="1.9" fill="none"/></svg>
<svg class="abs" style="left:747.0px;top:371.0px" width="9" height="9" viewBox="0 0 9 9"><path d="M1.6 1.6 L7.6 7.6 M7.6 1.6 L1.6 7.6" stroke="#e2502a" stroke-width="1.9" fill="none"/></svg>
<svg class="abs" style="left:803.0px;top:371.0px" width="9" height="9" viewBox="0 0 9 9"><path d="M1.6 1.6 L7.6 7.6 M7.6 1.6 L1.6 7.6" stroke="#e2502a" stroke-width="1.9" fill="none"/></svg>
<svg class="abs" style="left:864.5px;top:371.0px" width="9" height="9" viewBox="0 0 9 9"><path d="M1.6 1.6 L7.6 7.6 M7.6 1.6 L1.6 7.6" stroke="#e2502a" stroke-width="1.9" fill="none"/></svg>
<svg class="abs" style="left:919.5px;top:371.0px" width="9" height="9" viewBox="0 0 9 9"><path d="M1.6 1.6 L7.6 7.6 M7.6 1.6 L1.6 7.6" stroke="#e2502a" stroke-width="1.9" fill="none"/></svg>
<svg class="abs" style="left:970.0px;top:371.0px" width="9" height="9" viewBox="0 0 9 9"><path d="M1.6 1.6 L7.6 7.6 M7.6 1.6 L1.6 7.6" stroke="#e2502a" stroke-width="1.9" fill="none"/></svg>
<svg class="abs" style="left:1017.0px;top:371.0px" width="9" height="9" viewBox="0 0 9 9"><path d="M1.6 1.6 L7.6 7.6 M7.6 1.6 L1.6 7.6" stroke="#e2502a" stroke-width="1.9" fill="none"/></svg>
<svg class="abs" style="left:1065.0px;top:371.0px" width="9" height="9" viewBox="0 0 9 9"><path d="M1.6 1.6 L7.6 7.6 M7.6 1.6 L1.6 7.6" stroke="#e2502a" stroke-width="1.9" fill="none"/></svg>
<svg class="abs" style="left:1121.0px;top:371.0px" width="9" height="9" viewBox="0 0 9 9"><path d="M1.6 1.6 L7.6 7.6 M7.6 1.6 L1.6 7.6" stroke="#e2502a" stroke-width="1.9" fill="none"/></svg>
<svg class="abs" style="left:1181.0px;top:371.0px" width="9" height="9" viewBox="0 0 9 9"><path d="M1.6 1.6 L7.6 7.6 M7.6 1.6 L1.6 7.6" stroke="#e2502a" stroke-width="1.9" fill="none"/></svg>
<svg class="abs" style="left:1233.0px;top:371.0px" width="9" height="9" viewBox="0 0 9 9"><path d="M1.6 1.6 L7.6 7.6 M7.6 1.6 L1.6 7.6" stroke="#e2502a" stroke-width="1.9" fill="none"/></svg>
<svg class="abs" style="left:1273.0px;top:371.0px" width="9" height="9" viewBox="0 0 9 9"><path d="M1.6 1.6 L7.6 7.6 M7.6 1.6 L1.6 7.6" stroke="#e2502a" stroke-width="1.9" fill="none"/></svg>
<div style="position:absolute;left:266.50px;top:410px;width:73px;text-align:center;font:normal 10.4px/10.4px 'Liberation Serif', serif;color:#555555;white-space:nowrap;">User</div>
<div style="position:absolute;left:339.50px;top:410px;width:73px;text-align:center;font:normal 10.4px/10.4px 'Liberation Serif', serif;color:#555555;white-space:nowrap;">Regular user</div>
<svg class="abs" style="left:235px;top:411.3px" width="11" height="5" viewBox="0 0 11 5"><circle cx="2.3" cy="2.2" r="1.45" fill="#3a3a3a"/><circle cx="5.5" cy="2.2" r="1.45" fill="#3a3a3a"/><circle cx="8.7" cy="2.2" r="1.45" fill="#3a3a3a"/></svg>
<svg class="abs" style="left:443.5px;top:410.0px" width="11" height="9" viewBox="0 0 11 9"><path d="M1.6 4.4 L4.6 7.2 L9.9 1.7" stroke="#45ad4e" stroke-width="2.2" fill="none"/></svg>
<svg class="abs" style="left:502.0px;top:410.0px" width="11" height="9" viewBox="0 0 11 9"><path d="M1.6 4.4 L4.6 7.2 L9.9 1.7" stroke="#45ad4e" stroke-width="2.2" fill="none"/></svg>
<svg class="abs" style="left:544.0px;top:410.0px" width="11" height="9" viewBox="0 0 11 9"><path d="M1.6 4.4 L4.6 7.2 L9.9 1.7" stroke="#45ad4e" stroke-width="2.2" fill="none"/></svg>
<svg class="abs" style="left:591.0px;top:410.0px" width="11" height="9" viewBox="0 0 11 9"><path d="M1.6 4.4 L4.6 7.2 L9.9 1.7" stroke="#45ad4e" stroke-width="2.2" fill="none"/></svg>
<svg class="abs" style="left:642.5px;top:410.0px" width="11" height="9" viewBox="0 0 11 9"><path d="M1.6 4.4 L4.6 7.2 L9.9 1.7" stroke="#45ad4e" stroke-width="2.2" fill="none"/></svg>
<svg class="abs" style="left:694.0px;top:410.0px" width="11" height="9" viewBox="0 0 11 9"><path d="M1.6 4.4 L4.6 7.2 L9.9 1.7" stroke="#45ad4e" stroke-width="2.2" fill="none"/></svg>
<svg class="abs" style="left:746.0px;top:410.0px" width="11" height="9" viewBox="0 0 11 9"><path d="M1.6 4.4 L4.6 7.2 L9.9 1.7" stroke="#45ad4e" stroke-width="2.2" fill="none"/></svg>
<svg class="abs" style="left:802.0px;top:410.0px" width="11" height="9" viewBox="0 0 11 9"><path d="M1.6 4.4 L4.6 7.2 L9.9 1.7" stroke="#45ad4e" stroke-width="2.2" fill="none"/></svg>
<svg class="abs" style="left:863.5px;top:410.0px" width="11" height="9" viewBox="0 0 11 9"><path d="M1.6 4.4 L4.6 7.2 L9.9 1.7" stroke="#45ad4e" stroke-width="2.2" fill="none"/></svg>
<svg class="abs" style="left:918.5px;top:410.0px" width="11" height="9" viewBox="0 0 11 9"><path d="M1.6 4.4 L4.6 7.2 L9.9 1.7" stroke="#45ad4e" stroke-width="2.2" fill="none"/></svg>
<svg class="abs" style="left:970.0px;top:410.0px" width="9" height="9" viewBox="0 0 9 9"><path d="M1.6 1.6 L7.6 7.6 M7.6 1.6 L1.6 7.6" stroke="#e2502a" stroke-width="1.9" fill="none"/></svg>
<svg class="abs" style="left:1017.0px;top:410.0px" width="9" height="9" viewBox="0 0 9 9"><path d="M1.6 1.6 L7.6 7.6 M7.6 1.6 L1.6 7.6" stroke="#e2502a" stroke-width="1.9" fill="none"/></svg>
<svg class="abs" style="left:1065.0px;top:410.0px" width="9" height="9" viewBox="0 0 9 9"><path d="M1.6 1.6 L7.6 7.6 M7.6 1.6 L1.6 7.6" stroke="#e2502a" stroke-width="1.9" fill="none"/></svg>
<svg class="abs" style="left:1121.0px;top:410.0px" width="9" height="9" viewBox="0 0 9 9"><path d="M1.6 1.6 L7.6 7.6 M7.6 1.6 L1.6 7.6" stroke="#e2502a" stroke-width="1.9" fill="none"/></svg>
<svg class="abs" style="left:1181.0px;top:410.0px" width="9" height="9" viewBox="0 0 9 9"><path d="M1.6 1.6 L7.6 7.6 M7.6 1.6 L1.6 7.6" stroke="#e2502a" stroke-width="1.9" fill="none"/></svg>
<svg class="abs" style="left:1233.0px;top:410.0px" width="9" height="9" viewBox="0 0 9 9"><path d="M1.6 1.6 L7.6 7.6 M7.6 1.6 L1.6 7.6" stroke="#e2502a" stroke-width="1.9" fill="none"/></svg>
<svg class="abs" style="left:1273.0px;top:410.0px" width="9" height="9" viewBox="0 0 9 9"><path d="M1.6 1.6 L7.6 7.6 M7.6 1.6 L1.6 7.6" stroke="#e2502a" stroke-width="1.9" fill="none"/></svg>
<div class="abs" style="left:1319px;top:46px;width:31px;height:721px;background:#f6f6f6;"></div>
<div class="abs" style="left:1350px;top:0;width:16px;height:767px;background:#f1f1f1;"></div>
<div class="abs" style="left:1351px;top:17px;width:13px;height:678px;background:#c1c1c1;"></div>
<svg class="abs" style="left:1350px;top:4px" width="16" height="10" viewBox="0 0 16 10"><path d="M3.8 6.8 L7.9 2.8 L11.8 6.8 Z" fill="#a3a3a3"/></svg>
<svg class="abs" style="left:1350px;top:754px" width="16" height="10" viewBox="0 0 16 10"><path d="M3.8 2.9 L11.8 2.9 L7.9 6.9 Z" fill="#505050"/></svg>
</body></html>
